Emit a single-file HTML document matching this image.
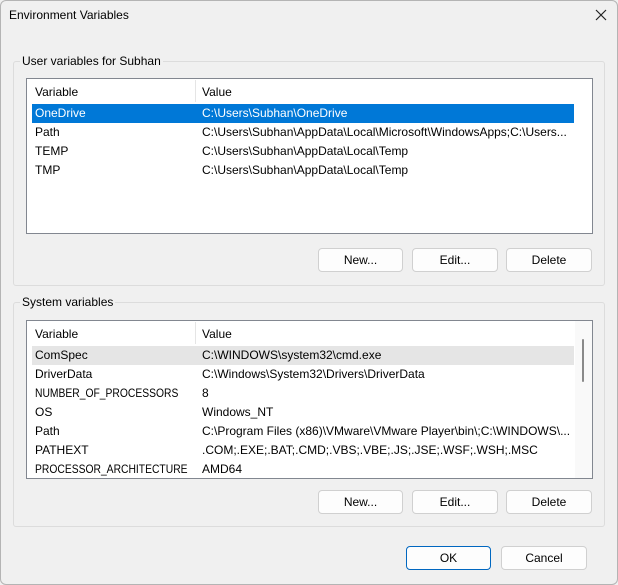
<!DOCTYPE html>
<html><head><style>
body{margin:0;width:618px;height:585px;background:#f0f0f0;font-family:"Liberation Sans",sans-serif;font-size:12px;color:#000;position:relative;overflow:hidden}
.a{position:absolute}
.win{left:0;top:0;width:616px;height:583px;border:1px solid #b4b4b4;border-radius:6px}
.grp{border:1px solid #dcdcdc;border-radius:3px}
.lbl{background:#f0f0f0;padding:0 2px}
.lv{background:#fff;border:1px solid #828790;overflow:hidden}
.row{position:absolute;left:5px;height:19px;line-height:19px;width:542px;white-space:nowrap}
.row span{position:absolute;left:170px}
.row b{font-weight:normal;position:absolute;left:3px}
.row b.c{transform:scaleX(0.86);transform-origin:left center}
.btn{position:absolute;height:22px;line-height:22px;text-align:center;background:#fdfdfd;border:1px solid #d0d0d0;border-radius:4px}
.hdr{position:absolute;top:3px;left:0;height:20px;line-height:20px;width:100%}
</style></head><body>
<div class="a win"></div>
<div class="a" style="left:9px;top:8px;font-size:12px">Environment Variables</div>
<svg class="a" style="left:595px;top:9px" width="12" height="12"><path d="M1 1L11 11M11 1L1 11" stroke="#222" stroke-width="1.2"/></svg>

<div class="a grp" style="left:13px;top:61px;width:590px;height:223px"></div>
<div class="a lbl" style="left:20px;top:54px">User variables for Subhan</div>
<div class="a lv" style="left:26px;top:78px;width:565px;height:154px">
 <div class="hdr"><span class="a" style="left:8px">Variable</span><span class="a" style="left:168px;top:-2px;height:22px;border-left:1px solid #e5e5e5"></span><span class="a" style="left:175px">Value</span></div>
 <div class="row" style="top:25px;background:#0078d7;color:#fff"><b>OneDrive</b><span>C:\Users\Subhan\OneDrive</span></div>
 <div class="row" style="top:44px"><b>Path</b><span>C:\Users\Subhan\AppData\Local\Microsoft\WindowsApps;C:\Users...</span></div>
 <div class="row" style="top:63px"><b>TEMP</b><span>C:\Users\Subhan\AppData\Local\Temp</span></div>
 <div class="row" style="top:82px"><b>TMP</b><span>C:\Users\Subhan\AppData\Local\Temp</span></div>
</div>
<div class="btn" style="left:318px;top:248px;width:83px">New...</div>
<div class="btn" style="left:412px;top:248px;width:84px">Edit...</div>
<div class="btn" style="left:506px;top:248px;width:84px">Delete</div>

<div class="a grp" style="left:13px;top:302px;width:590px;height:223px"></div>
<div class="a lbl" style="left:20px;top:295px">System variables</div>
<div class="a lv" style="left:26px;top:320px;width:565px;height:157px">
 <div class="hdr"><span class="a" style="left:8px">Variable</span><span class="a" style="left:168px;top:-2px;height:22px;border-left:1px solid #e5e5e5"></span><span class="a" style="left:175px">Value</span></div>
 <div class="row" style="top:25px;background:#e5e5e5"><b>ComSpec</b><span>C:\WINDOWS\system32\cmd.exe</span></div>
 <div class="row" style="top:44px"><b>DriverData</b><span>C:\Windows\System32\Drivers\DriverData</span></div>
 <div class="row" style="top:63px"><b class="c">NUMBER_OF_PROCESSORS</b><span>8</span></div>
 <div class="row" style="top:82px"><b>OS</b><span>Windows_NT</span></div>
 <div class="row" style="top:101px"><b>Path</b><span>C:\Program Files (x86)\VMware\VMware Player\bin\;C:\WINDOWS\...</span></div>
 <div class="row" style="top:120px"><b>PATHEXT</b><span>.COM;.EXE;.BAT;.CMD;.VBS;.VBE;.JS;.JSE;.WSF;.WSH;.MSC</span></div>
 <div class="row" style="top:139px"><b class="c">PROCESSOR_ARCHITECTURE</b><span>AMD64</span></div>
 <div class="a" style="left:548px;top:0;width:17px;height:157px;background:#f9f9f9"></div>
 <div class="a" style="left:555px;top:18px;width:2px;height:43px;background:#8a8a8a;border-radius:1px"></div>
</div>
<div class="btn" style="left:318px;top:490px;width:83px">New...</div>
<div class="btn" style="left:412px;top:490px;width:84px">Edit...</div>
<div class="btn" style="left:506px;top:490px;width:84px">Delete</div>

<div class="btn" style="left:406px;top:546px;width:83px;border:1px solid #0067c0">OK</div>
<div class="btn" style="left:501px;top:546px;width:84px">Cancel</div>
</body></html>
